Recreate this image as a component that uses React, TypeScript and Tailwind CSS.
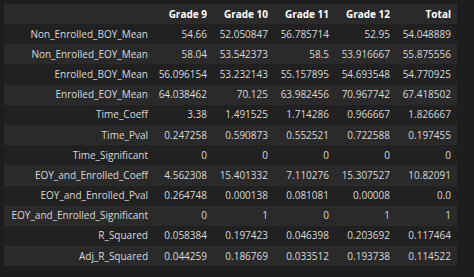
import React from 'react';

const columns = ['Grade 9', 'Grade 10', 'Grade 11', 'Grade 12', 'Total'];

const rows: [string, string[]][] = [
    ['Non_Enrolled_BOY_Mean', ['54.66', '52.050847', '56.785714', '52.95', '54.048889']],
    ['Non_Enrolled_EOY_Mean', ['58.04', '53.542373', '58.5', '53.916667', '55.875556']],
    ['Enrolled_BOY_Mean', ['56.096154', '53.232143', '55.157895', '54.693548', '54.770925']],
    ['Enrolled_EOY_Mean', ['64.038462', '70.125', '63.982456', '70.967742', '67.418502']],
    ['Time_Coeff', ['3.38', '1.491525', '1.714286', '0.966667', '1.826667']],
    ['Time_Pval', ['0.247258', '0.590873', '0.552521', '0.722588', '0.197455']],
    ['Time_Significant', ['0', '0', '0', '0', '0']],
    ['EOY_and_Enrolled_Coeff', ['4.562308', '15.401332', '7.110276', '15.307527', '10.82091']],
    ['EOY_and_Enrolled_Pval', ['0.264748', '0.000138', '0.081081', '0.00008', '0.0']],
    ['EOY_and_Enrolled_Significant', ['0', '1', '0', '1', '1']],
    ['R_Squared', ['0.058384', '0.197423', '0.046398', '0.203692', '0.117464']],
    ['Adj_R_Squared', ['0.044259', '0.186769', '0.033512', '0.193738', '0.114522']],
];

const App: React.FC = () => {
    return (
        <div className="w-[474px] h-[277px] bg-[#1d1d1d] pt-1 pl-1 font-['Open_Sans',sans-serif] text-[10px]">
            <table className="table-fixed border-collapse w-[453px]">
                <colgroup>
                    <col className="w-[148px]" />
                    {columns.map((c) => (
                        <col key={c} className="w-[61px]" />
                    ))}
                </colgroup>
                <thead>
                    <tr className="h-[20px] bg-[#2a2a2a]">
                        <th className="p-0"></th>
                        {columns.map((c) => (
                            <th key={c} className="p-0 pr-[6px] text-right font-bold text-white">
                                {c}
                            </th>
                        ))}
                    </tr>
                </thead>
                <tbody>
                    {rows.map(([label, values], i) => (
                        <tr
                            key={label}
                            className={`h-[20.2px] ${i % 2 === 0 ? 'bg-[#212121]' : 'bg-[#2a2a2a]'}`}
                        >
                            <th className="p-0 pr-[4px] text-right font-normal text-[#d9d9d9] whitespace-nowrap">
                                {label}
                            </th>
                            {values.map((v, j) => (
                                <td key={j} className="p-0 pr-[6px] text-right text-[#d9d9d9]">
                                    {v}
                                </td>
                            ))}
                        </tr>
                    ))}
                </tbody>
            </table>
        </div>
    );
};

export default App;
